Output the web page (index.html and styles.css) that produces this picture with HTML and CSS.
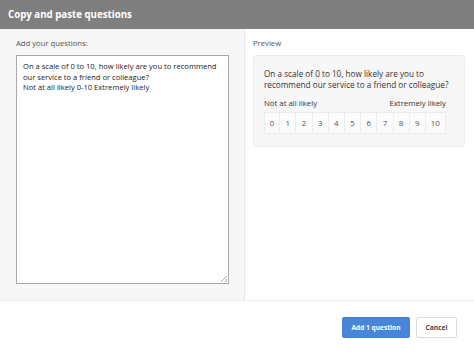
FILE: index.html
```html
<!DOCTYPE html>
<html>
<head>
<meta charset="utf-8">
<link rel="stylesheet" href="styles.css">
</head>
<body>
<div class="dialog">
  <div class="header">Copy and paste questions</div>
  <div class="main">
    <div class="left">
      <div class="label">Add your questions:</div>
      <div class="textarea">On a scale of 0 to 10, how likely are you to recommend our service to a friend or colleague?<br>Not at all likely 0-10 Extremely likely<span class="grip"></span></div>
    </div>
    <div class="right">
      <div class="label">Preview</div>
      <div class="preview">
        <div class="inner">
          <div class="question">On a scale of 0 to 10, how likely are you to recommend our service to a friend or colleague?</div>
          <div class="ends"><span>Not at all likely</span><span>Extremely likely</span></div>
          <div class="scale">
            <span class="cell">0</span><span class="cell">1</span><span class="cell">2</span><span class="cell">3</span><span class="cell">4</span><span class="cell">5</span><span class="cell">6</span><span class="cell">7</span><span class="cell">8</span><span class="cell">9</span><span class="cell wide">10</span>
          </div>
        </div>
      </div>
    </div>
  </div>
  <div class="footer">
    <button class="btn primary">Add 1 question</button>
    <button class="btn secondary">Cancel</button>
  </div>
</div>
</body>
</html>
```
FILE: styles.css
```css
* { box-sizing: border-box; }
html, body { margin: 0; padding: 0; background: #fff; }
body { font-family: "Open Sans", "DejaVu Sans", sans-serif; width: 474px; height: 355px; overflow: hidden; }
.header {
  height: 29px;
  background: #7f7f7f;
  color: #fff;
  font-weight: 700;
  font-size: 9.7px;
  line-height: 29px;
  padding-left: 8px;
}
.main {
  display: flex;
  height: 272px;
  border-bottom: 1px solid #ececec;
}
.left {
  width: 245px;
  background: #f7f7f7;
  border-right: 1px solid #e8e8e8;
  padding: 8px 15px 16px 16px;
  display: flex;
  flex-direction: column;
}
.label {
  font-size: 7.7px;
  line-height: 12px;
  color: #555;
  margin-bottom: 6px;
}
.textarea {
  position: relative;
  width: 213px;
  height: 229px;
  background: #fff;
  border: 1px solid #a9a9a9;
  padding: 5px 6px;
  font-size: 7.6px;
  line-height: 10.6px;
  color: #222;
}
.grip {
  position: absolute;
  right: 1px;
  bottom: 1px;
  width: 6px;
  height: 6px;
  background: linear-gradient(135deg, transparent 45%, #aaa 45%, #aaa 55%, transparent 55%, transparent 75%, #aaa 75%, #aaa 85%, transparent 85%);
}
.right {
  flex: 1;
  padding: 8px 9px 0 8px;
}
.preview {
  background: #f7f7f7;
  border: 1px solid #ececec;
  border-radius: 3px;
  padding: 13px 10px 12px 10px;
}
.inner {
  width: 182px;
}
.question {
  width: 188px;
  font-size: 8.2px;
  line-height: 10.8px;
  color: #333;
  margin-bottom: 7px;
}
.ends {
  display: flex;
  justify-content: space-between;
  font-size: 7.8px;
  line-height: 11px;
  color: #333;
  margin-bottom: 3px;
}
.scale {
  display: flex;
}
.cell {
  width: 16.2px;
  height: 22px;
  background: #fbfbfb;
  border: 1px solid #ececec;
  border-left: none;
  font-size: 7.9px;
  line-height: 20px;
  text-align: center;
  color: #555;
}
.cell:first-child { border-left: 1px solid #ececec; }
.cell.wide { width: 20px; }
.footer {
  display: flex;
  justify-content: flex-end;
  gap: 6px;
  padding: 16px 17px 0 0;
}
.btn {
  height: 21px;
  font-family: "Open Sans", "DejaVu Sans", sans-serif;
  font-weight: 700;
  font-size: 6.6px;
  border-radius: 2px;
  padding: 0;
  cursor: pointer;
}
.primary {
  width: 68px;
  background: #4a86d8;
  border: 1px solid #4280d4;
  color: #fff;
}
.secondary {
  width: 41px;
  background: #fff;
  border: 1px solid #dcdcdc;
  color: #444;
}
```
